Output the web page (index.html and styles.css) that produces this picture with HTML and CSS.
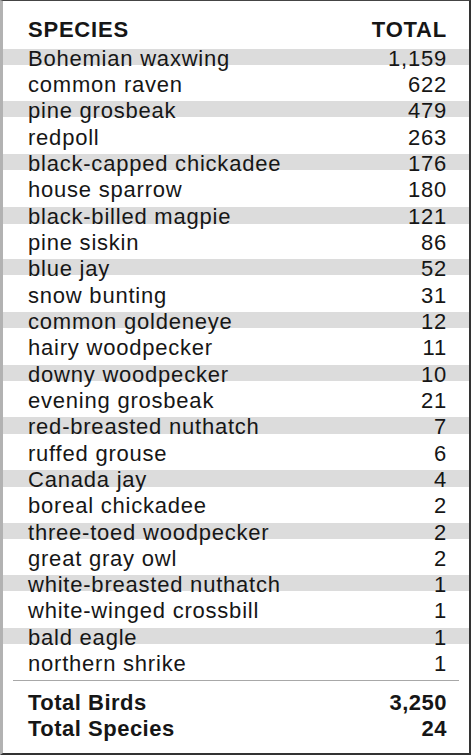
FILE: index.html
```html
<!DOCTYPE html>
<html>
<head>
<meta charset="utf-8">
<link rel="stylesheet" href="styles.css">
</head>
<body>
<div class="sheet">
  <div class="row head"><span>SPECIES</span><span>TOTAL</span></div>
  <div class="rows">
    <div class="row"><span>Bohemian waxwing</span><span>1,159</span></div>
    <div class="row"><span>common raven</span><span>622</span></div>
    <div class="row"><span>pine grosbeak</span><span>479</span></div>
    <div class="row"><span>redpoll</span><span>263</span></div>
    <div class="row"><span>black-capped chickadee</span><span>176</span></div>
    <div class="row"><span>house sparrow</span><span>180</span></div>
    <div class="row"><span>black-billed magpie</span><span>121</span></div>
    <div class="row"><span>pine siskin</span><span>86</span></div>
    <div class="row"><span>blue jay</span><span>52</span></div>
    <div class="row"><span>snow bunting</span><span>31</span></div>
    <div class="row"><span>common goldeneye</span><span>12</span></div>
    <div class="row"><span>hairy woodpecker</span><span>11</span></div>
    <div class="row"><span>downy woodpecker</span><span>10</span></div>
    <div class="row"><span>evening grosbeak</span><span>21</span></div>
    <div class="row"><span>red-breasted nuthatch</span><span>7</span></div>
    <div class="row"><span>ruffed grouse</span><span>6</span></div>
    <div class="row"><span>Canada jay</span><span>4</span></div>
    <div class="row"><span>boreal chickadee</span><span>2</span></div>
    <div class="row"><span>three-toed woodpecker</span><span>2</span></div>
    <div class="row"><span>great gray owl</span><span>2</span></div>
    <div class="row"><span>white-breasted nuthatch</span><span>1</span></div>
    <div class="row"><span>white-winged crossbill</span><span>1</span></div>
    <div class="row"><span>bald eagle</span><span>1</span></div>
    <div class="row"><span>northern shrike</span><span>1</span></div>
  </div>
  <div class="rule"></div>
  <div class="totals">
    <div class="row total"><span>Total Birds</span><span>3,250</span></div>
    <div class="row total"><span>Total Species</span><span>24</span></div>
  </div>
</div>
</body>
</html>
```
FILE: styles.css
```css
html, body {
  margin: 0;
  padding: 0;
  background: #ffffff;
}

.sheet {
  box-sizing: border-box;
  width: 471px;
  height: 754.5px;
  border-top: 1px solid #444444;
  border-left: 3px solid #b2b2b2;
  border-right: 2px solid #333333;
  border-bottom: 2px solid #333333;
  padding-top: 15.6px;
  font-family: "Liberation Sans", Arial, Helvetica, sans-serif;
  font-size: 22px;
  letter-spacing: 0.78px;
  color: #161616;
}

.row {
  display: flex;
  justify-content: space-between;
  height: 26.33px;
  line-height: 26.33px;
  padding: 0 22px 0 25px;
  white-space: nowrap;
}

.head {
  height: 29px;
  font-weight: bold;
}

.rows .row:nth-child(odd) {
  background: linear-gradient(to bottom,
    transparent 2.7px,
    #dcdcdc 2.7px,
    #dcdcdc 19.5px,
    transparent 19.5px);
}

.rule {
  height: 1px;
  background: #a8a8a8;
  margin: 2.5px 10px 0 10px;
}

.totals {
  padding-top: 8.6px;
}

.total {
  font-weight: bold;
  letter-spacing: 0.5px;
  height: 26.5px;
  line-height: 26.5px;
}
```
